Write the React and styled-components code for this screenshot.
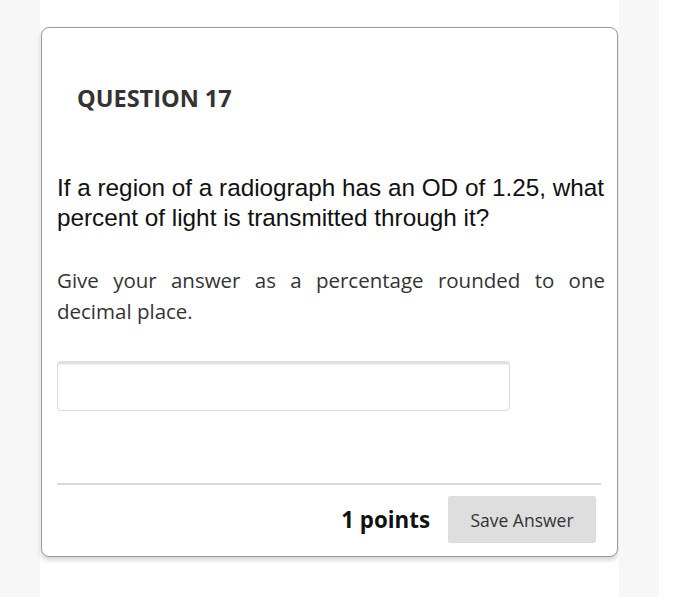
import React from "react";
import styled, { createGlobalStyle } from "styled-components";

const Global = createGlobalStyle`
  html, body {
    margin: 0;
    padding: 0;
    background: #fff;
  }
  * { box-sizing: border-box; }
`;

const Page = styled.div`
  display: flex;
  height: 597px;
  background: #fff;
`;

const Gutter = styled.div`
  width: 40px;
  flex-shrink: 0;
  background: #f7f7f7;
`;

const Column = styled.div`
  width: 579px;
  flex-shrink: 0;
  background: #fff;
  padding: 27px 1px 0 1px;
`;

const Card = styled.div`
  height: 530px;
  border: 1px solid #9a9a9a;
  border-radius: 8px;
  box-shadow: 0 3px 5px rgba(0, 0, 0, 0.18);
  background: #fff;
  padding: 0 12px 0 15px;
  display: flex;
  flex-direction: column;
`;

const Title = styled.h2`
  margin: 54px 0 0 20px;
  font-family: "Open Sans", sans-serif;
  font-weight: 700;
  font-size: 23.5px;
  line-height: 32px;
  color: #333;
`;

const Prompt = styled.p`
  margin: 59px 0 0 0;
  font-family: "Liberation Sans", Arial, sans-serif;
  font-size: 24.3px;
  line-height: 30px;
  color: #111;
`;

const Hint = styled.p`
  margin: 32px 0 0 0;
  font-family: "Open Sans", sans-serif;
  font-size: 20.5px;
  line-height: 31px;
  color: #333;
  text-align: justify;
`;

const AnswerInput = styled.input`
  margin-top: 34px;
  width: 453px;
  height: 50px;
  border: 1px solid #dcdcdc;
  border-top: 3px solid #e0e0e0;
  border-radius: 4px;
  box-shadow: inset 0 1px 2px rgba(0, 0, 0, 0.06);
  outline: none;
  padding: 0 10px;
  font-family: "Open Sans", sans-serif;
  font-size: 18px;
`;

const Divider = styled.hr`
  margin: 72px 4px 0 0;
  border: none;
  border-top: 2px solid #d9d9d9;
`;

const Footer = styled.div`
  display: flex;
  justify-content: flex-end;
  align-items: center;
  gap: 18px;
  margin-top: 11px;
  padding-right: 9px;
`;

const Points = styled.span`
  font-family: "Open Sans", sans-serif;
  font-weight: 700;
  font-size: 22.3px;
  color: #111;
`;

const SaveButton = styled.button`
  width: 148px;
  height: 47px;
  border: none;
  border-radius: 2px;
  background: #dedede;
  font-family: "Open Sans", sans-serif;
  font-size: 17.5px;
  color: #333;
`;

export default function App() {
  return (
    <>
      <Global />
      <Page>
        <Gutter />
        <Column>
          <Card>
            <Title>QUESTION 17</Title>
            <Prompt>
              If a region of a radiograph has an OD of 1.25, what percent of
              light is transmitted through it?
            </Prompt>
            <Hint>
              Give your answer as a percentage rounded to one decimal place.
            </Hint>
            <AnswerInput type="text" />
            <Divider />
            <Footer>
              <Points>1 points</Points>
              <SaveButton>Save Answer</SaveButton>
            </Footer>
          </Card>
        </Column>
        <Gutter />
      </Page>
    </>
  );
}
